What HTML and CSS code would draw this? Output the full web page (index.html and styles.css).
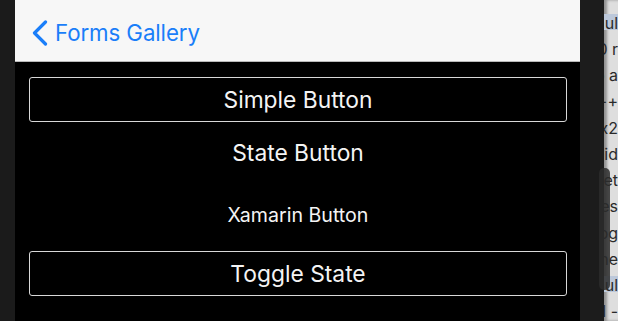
FILE: index.html
```html
<!DOCTYPE html>
<html>
<head>
<meta charset="utf-8">
<link rel="stylesheet" href="styles.css">
</head>
<body>
<div class="desk">
  <div class="bezel-left"></div>
  <div class="screen">
    <header class="navbar">
      <a class="back">
        <svg class="chev" width="16" height="26" viewBox="0 0 16 26"><path d="M13.5 2 L2.5 13 L13.5 24" fill="none" stroke="#1a7ef9" stroke-width="3.2" stroke-linecap="round" stroke-linejoin="round"/></svg>
        <span class="back-label">Forms Gallery</span>
      </a>
    </header>
    <main class="content">
      <div class="btn boxed">Simple Button</div>
      <div class="btn state">State Button</div>
      <div class="btn xam">Xamarin Button</div>
      <div class="btn boxed toggle">Toggle State</div>
    </main>
  </div>
  <div class="bezel-right"></div>
  <div class="behind">
    <div class="row hl first"><span>simul</span></div>
    <div class="row"><span>10 r</span></div>
    <div class="row"><span>to a</span></div>
    <div class="row"><span>C++</span></div>
    <div class="row"><span>x2</span></div>
    <div class="row"><span>Andbid</span></div>
    <div class="row"><span>Nevet</span></div>
    <div class="row"><span>Yes</span></div>
    <div class="row"><span>Debg</span></div>
    <div class="row"><span>None</span></div>
    <div class="row hl"><span>simul</span></div>
    <div class="row"><span>Add -</span></div>
  </div>
  <div class="thumb"></div>
</div>
</body>
</html>
```
FILE: styles.css
```css
html, body {
  margin: 0;
  padding: 0;
  background: #1b1b1b;
}
.desk {
  position: relative;
  display: flex;
  width: 618px;
  height: 321px;
  overflow: hidden;
  font-family: "Inter", "Liberation Sans", sans-serif;
}
.bezel-left {
  width: 15px;
  flex: none;
  background: #1b1b1b;
}
.screen {
  width: 565px;
  flex: none;
  background: #000;
  display: flex;
  flex-direction: column;
}
.navbar {
  height: 62px;
  box-sizing: border-box;
  background: #f7f7f7;
  border-bottom: 1px solid #b9b9b9;
  display: flex;
  align-items: center;
  padding-left: 17px;
  padding-top: 4px;
}
.back {
  display: flex;
  align-items: center;
  color: #1a7ef9;
  font-size: 22.3px;
  letter-spacing: -0.1px;
}
.chev {
  margin-right: 7px;
}
.content {
  padding: 15px 13px 0 14px;
  display: flex;
  flex-direction: column;
}
.btn {
  display: flex;
  align-items: center;
  justify-content: center;
  color: #f4f4f4;
  font-size: 22.8px;
}
.boxed {
  height: 45px;
  box-sizing: border-box;
  border: 1.5px solid #d8d8d8;
  border-radius: 3px;
}
.state {
  height: 61px;
}
.xam {
  height: 63px;
  font-size: 19.6px;
}
.toggle {
  margin-top: 5px;
}
.bezel-right {
  width: 24px;
  flex: none;
  background: #1c1c1c;
}
.behind {
  flex: 1;
  background: #dedede;
  box-shadow: inset 3px 0 3px rgba(0,0,0,0.35);
  color: #2a2a2a;
  font-size: 16px;
  overflow: hidden;
}
.row {
  height: 26.2px;
  line-height: 16px;
  padding-top: 1px;
  box-sizing: border-box;
  white-space: nowrap;
  display: flex;
  justify-content: flex-end;
}
.row span {
  flex: none;
}
.row.first {
  margin-top: 14px;
}
.row.hl {
  background: linear-gradient(#bcc8da 0, #bcc8da 16px, transparent 16px);
}
.thumb {
  position: absolute;
  left: 599px;
  top: 168px;
  width: 11px;
  height: 122px;
  border-radius: 5px;
  background: #2c2c2c;
  opacity: 0.85;
}
```
